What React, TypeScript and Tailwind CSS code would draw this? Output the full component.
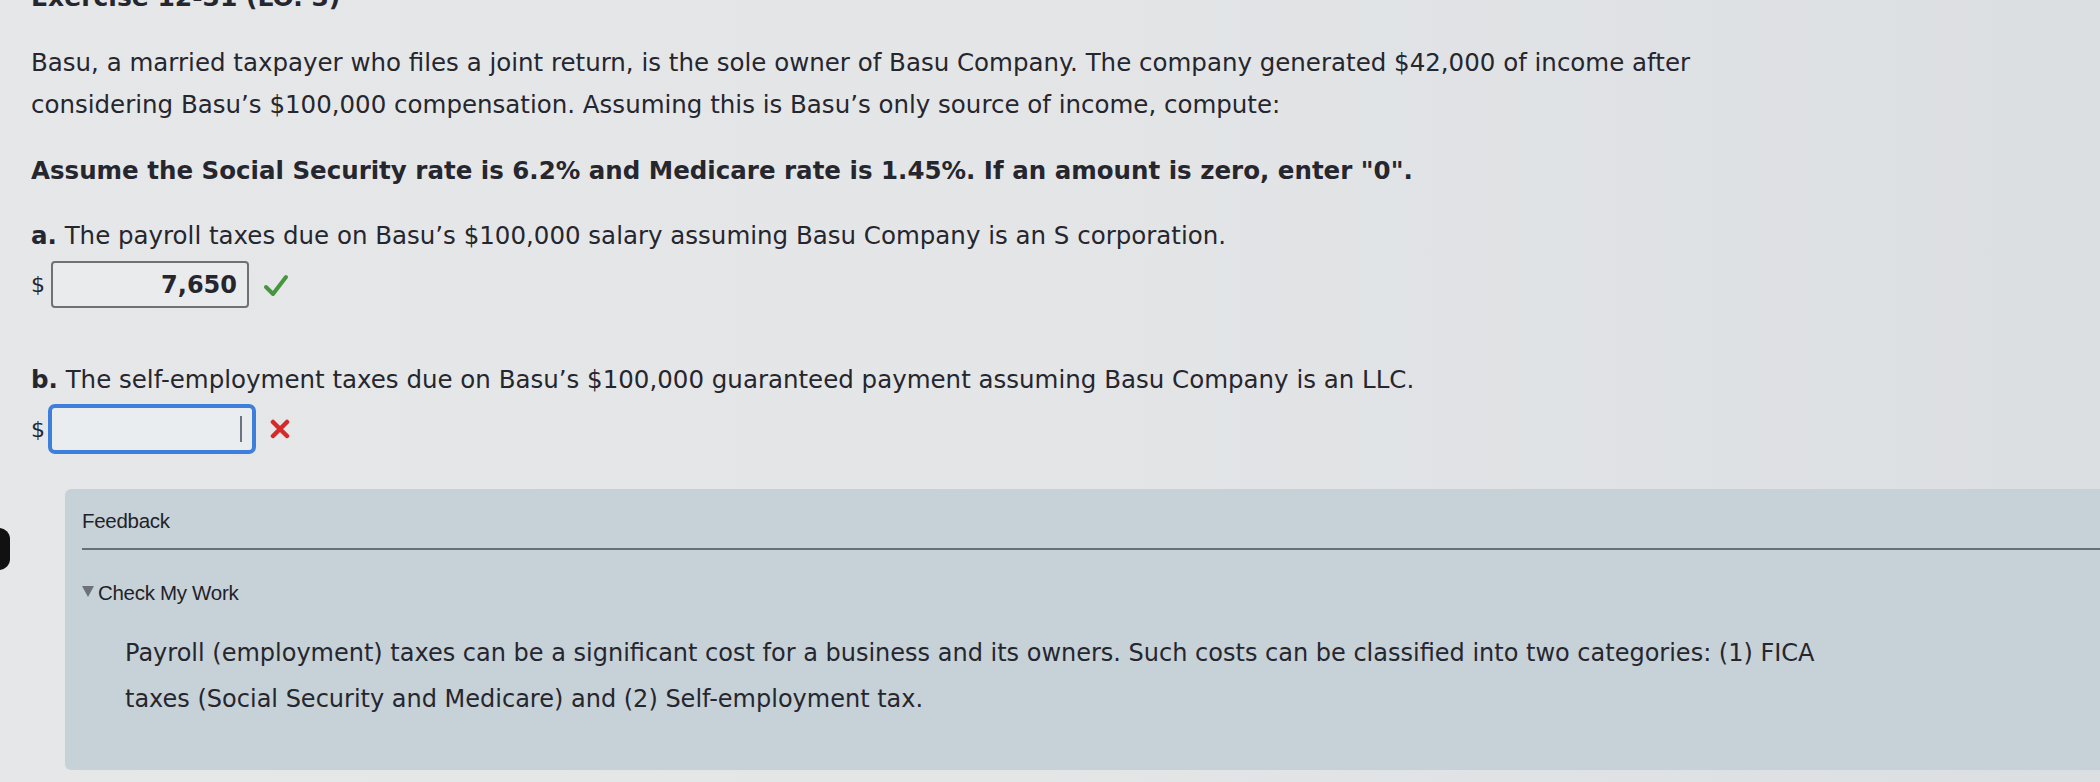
import React from "react";

const body = "font-['DejaVu_Sans',Verdana,sans-serif] text-[#26262e]";

function MoneyInput({ value, focused }: { value?: string; focused?: boolean }) {
  return (
    <div className="flex items-center">
      <span className={`${body} text-[22px] w-[20px]`}>$</span>
      {focused ? (
        <div className="-ml-[3px] w-[208px] h-[50px] rounded-[7px] border-[4px] border-[#3f7fdc] bg-[#eaedef] flex items-center justify-end pr-[10px]">
          <div className="w-[2px] h-[26px] bg-[#6b7280]" />
        </div>
      ) : (
        <div className="w-[198px] h-[47px] rounded-[4px] border-[2px] border-[#6f7275] bg-[#e9ebed] flex items-center justify-end pr-[10px]">
          <span className={`${body} text-[24px] font-bold`}>{value}</span>
        </div>
      )}
    </div>
  );
}

export default function App() {
  return (
    <div className="relative w-[2100px] h-[782px] overflow-hidden bg-gradient-to-r from-[#e6e7e9] via-[#e3e5e7] to-[#dcdfe2]">
      <div className="absolute -left-[12px] top-[528px] w-[22px] h-[42px] rounded-full bg-[#111]" />

      <div className="pl-[31px]">
        <div className={`${body} -mt-[17px] text-[25px] font-bold leading-[30px]`}>
          Exercise 12-31 (LO. 3)
        </div>

        <p className={`${body} mt-[29px] text-[24.5px] leading-[42px]`}>
          Basu, a married taxpayer who files a joint return, is the sole owner of Basu Company. The
          company generated $42,000 of income after
          <br />
          considering Basu’s $100,000 compensation. Assuming this is Basu’s only source of income,
          compute:
        </p>

        <p className={`${body} mt-[24px] text-[24.5px] leading-[42px] font-bold`}>
          Assume the Social Security rate is 6.2% and Medicare rate is 1.45%. If an amount is zero,
          enter "0".
        </p>

        <p className={`${body} mt-[23px] text-[24.5px] leading-[42px]`}>
          <span className="font-bold">a.</span> The payroll taxes due on Basu’s $100,000 salary
          assuming Basu Company is an S corporation.
        </p>
        <div className="mt-[4px] flex items-center gap-[14px]">
          <MoneyInput value="7,650" />
          <svg width="26" height="24" viewBox="0 0 26 24" className="mt-[2px]">
            <path d="M3 13 L10 20 L23 3" fill="none" stroke="#46963e" strokeWidth="4" strokeLinecap="round" strokeLinejoin="round" />
          </svg>
        </div>

        <p className={`${body} mt-[51px] text-[24.5px] leading-[42px]`}>
          <span className="font-bold">b.</span> The self-employment taxes due on Basu’s $100,000
          guaranteed payment assuming Basu Company is an LLC.
        </p>
        <div className="mt-[3px] flex items-center gap-[14px]">
          <MoneyInput focused />
          <svg width="20" height="20" viewBox="0 0 20 20">
            <path d="M3 3 L17 17 M17 3 L3 17" stroke="#d42a2a" strokeWidth="4.5" strokeLinecap="round" />
          </svg>
        </div>
      </div>

      <div className="ml-[65px] mt-[35px] h-[281px] rounded-l-[6px] bg-[#c6d1d8] pl-[17px] font-['Liberation_Sans',Arial,sans-serif] text-[#1f2228]">
        <div className="pt-[19px] text-[20.5px] leading-[26px] tracking-[-0.3px]">Feedback</div>
        <div className="mt-[14px] h-[2px] bg-[#66707b]" />
        <div className="mt-[30px] flex items-center gap-[4px] text-[20.5px] leading-[26px] tracking-[-0.3px]">
          <svg width="12" height="12" viewBox="0 0 12 12" className="-mt-[4px]">
            <path d="M0 1 H12 L6 12 Z" fill="#6d7279" />
          </svg>
          <span>Check My Work</span>
        </div>
        <p className={`${body} ml-[43px] mt-[24px] text-[24px] leading-[46px]`}>
          Payroll (employment) taxes can be a significant cost for a business and its owners. Such
          costs can be classified into two categories: (1) FICA
          <br />
          taxes (Social Security and Medicare) and (2) Self-employment tax.
        </p>
      </div>
    </div>
  );
}
